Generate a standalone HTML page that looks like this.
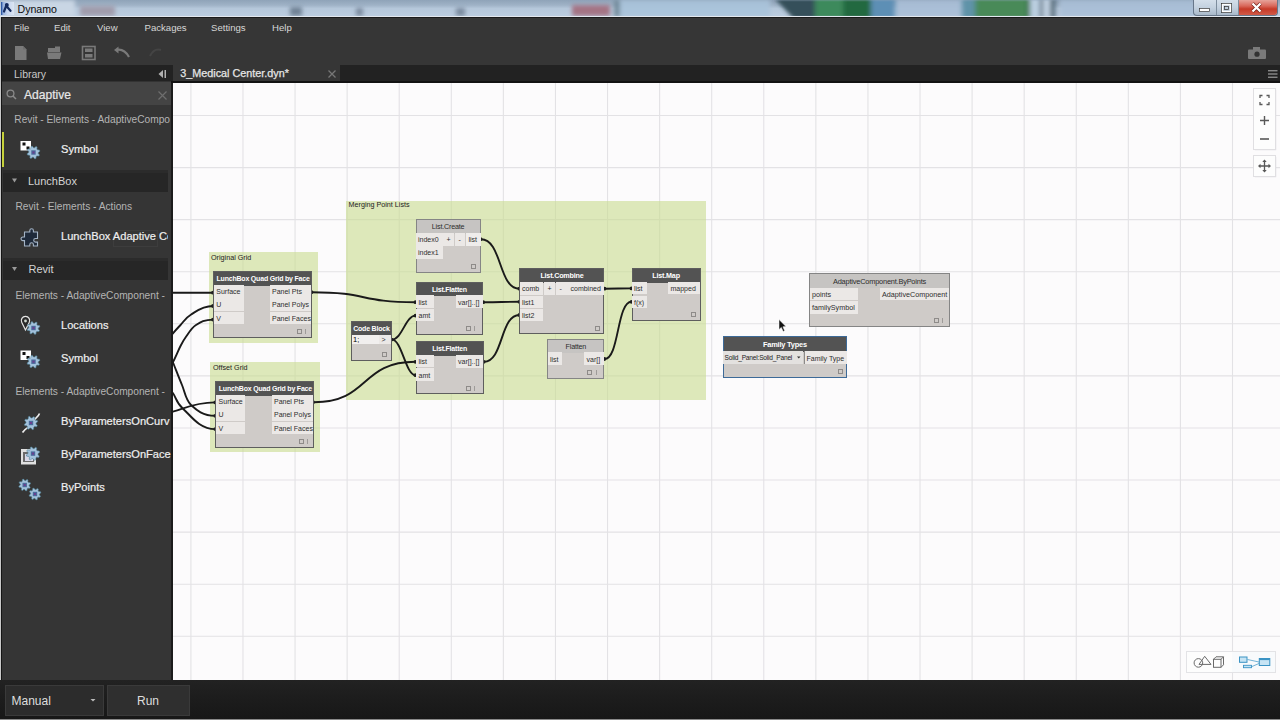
<!DOCTYPE html>
<html><head><meta charset="utf-8"><style>
*{margin:0;padding:0;box-sizing:border-box}
html,body{width:1280px;height:720px;overflow:hidden;background:#333;font-family:"Liberation Sans",sans-serif}
.a{position:absolute}
.t{position:absolute;white-space:nowrap;line-height:1}
.menu{position:absolute;white-space:nowrap;line-height:1;color:#d6d6d6;font-size:9.6px;top:23px}
.cat{position:absolute;white-space:nowrap;line-height:1;color:#b4b4b4;font-size:10.2px}
.item{position:absolute;white-space:nowrap;line-height:1;color:#efefef;font-size:11.1px;-webkit-text-stroke:0.2px #efefef}
.hdrt{position:absolute;white-space:nowrap;line-height:1;color:#d4d4d4;font-size:11px}
.node{position:absolute;background:#cfcbc8;border:1px solid #5e5e5e}
.nh{position:absolute;left:0;top:0;right:0;background:#535353}
.nh.l{background:#c6c4c2}
.ht{position:absolute;white-space:nowrap;line-height:1;color:#fff;font-weight:bold;font-size:7px;letter-spacing:-0.2px}
.ht.l{color:#2c2c2c;font-weight:normal}
.pc{position:absolute;background:#e5e2e0}
.pt{position:absolute;white-space:nowrap;line-height:1;color:#2e2e2e;font-size:7px}
.grp{position:absolute;background:#dfe8c4}
.gt{position:absolute;white-space:nowrap;line-height:1;font-size:7.2px;color:#222}
svg{position:absolute;left:0;top:0;overflow:visible}
</style></head><body>
<div class="a" style="left:0;top:0;width:1280px;height:17px;overflow:hidden;background:linear-gradient(180deg,#8fa3b8 0%,#9fb2c6 30%,#b5c7da 50%,#bccde0 100%)">
<svg width="1280" height="17"><defs><filter id="bl" x="-50%" y="-50%" width="200%" height="200%"><feGaussianBlur stdDeviation="2.2"/></filter><filter id="bl2" x="-20%" y="-50%" width="140%" height="200%"><feGaussianBlur stdDeviation="2.5 0.8"/></filter></defs>
<g filter="url(#bl)">
<rect x="0" y="0" width="75" height="17" fill="#c9d6e4"/>
<rect x="80" y="6" width="35" height="10" fill="#9d97a6" opacity="0.9"/>
<rect x="290" y="7" width="12" height="9" fill="#5f7084" opacity="0.8"/>
<rect x="356" y="8" width="7" height="8" fill="#6a7b8f" opacity="0.8"/>
<rect x="456" y="8" width="9" height="8" fill="#6a7b8f" opacity="0.8"/>
<rect x="572" y="5" width="38" height="11" fill="#a26f80" opacity="0.95"/>
<rect x="614" y="0" width="6" height="17" fill="#6f8797" opacity="0.9"/>
<rect x="620" y="0" width="150" height="17" fill="#a9c3da" opacity="0.9"/>
<rect x="895" y="0" width="70" height="17" fill="#a9bed6" opacity="0.9"/>
<rect x="1060" y="0" width="135" height="17" fill="#a9bfd6" opacity="0.9"/>
</g>
<g filter="url(#bl2)">
<polygon points="776,0 815,0 815,17 792,17" fill="#34505a"/>
<rect x="815" y="0" width="28" height="17" fill="#3c8a5c"/>
<rect x="843" y="0" width="28" height="17" fill="#21693f"/>
<rect x="871" y="0" width="24" height="17" fill="#5d8fb5"/>
<rect x="962" y="0" width="13" height="17" fill="#5e93a8"/>
<rect x="975" y="0" width="52" height="17" fill="#4a8a58"/>
<rect x="1027" y="0" width="3" height="17" fill="#2f6a40"/>
<rect x="1030" y="0" width="10" height="17" fill="#bcd0e2"/>
<rect x="1040" y="0" width="3" height="17" fill="#3d5565"/>
<rect x="1043" y="0" width="7" height="17" fill="#c5d6e6"/>
<rect x="1050" y="0" width="5" height="17" fill="#4a6070"/>
</g></svg>
</div>
<svg width="16" height="17" style="left:0;top:0"><defs><linearGradient id="lg" x1="0" x2="1"><stop offset="0" stop-color="#7f9fd4"/><stop offset="0.5" stop-color="#c6d5ee"/><stop offset="1" stop-color="#dbe5f2"/></linearGradient></defs><rect x="1" y="2" width="13" height="13" fill="url(#lg)"/><rect x="1" y="2" width="1.3" height="13" fill="#2f5aa8"/><circle cx="6.8" cy="5" r="2" fill="#142a5e"/><path d="M6.5 5 L4 11.5 M6.8 6.5 L10.5 10.8" stroke="#142a5e" stroke-width="2.2" stroke-linecap="round"/></svg>
<div class="t" style="left:17.5px;top:3.73px;font-size:10.6px;color:#0c0c0c">Dynamo</div>
<div class="a" style="left:1193px;top:0;width:85px;height:16px;border:1px solid #67778a;border-top:none;border-radius:0 0 4px 4px;overflow:hidden;background:linear-gradient(180deg,#d4dfea 0%,#c3d1df 50%,#a9b9ca 100%)">
<div class="a" style="left:44px;top:0;width:40px;height:15px;background:linear-gradient(180deg,#e6a39a 0%,#d9675a 40%,#c63a28 60%,#d05a48 100%)"></div>
<div class="a" style="left:22px;top:0;width:1px;height:15px;background:#7d8d9d"></div>
<div class="a" style="left:44px;top:0;width:1px;height:15px;background:#7d8d9d"></div>
</div>
<svg width="85" height="16" style="left:1193px;top:0">
<rect x="6.5" y="8.5" width="10" height="3" fill="#fff" stroke="#3a3a3a" stroke-width="0.7"/>
<rect x="28.5" y="3.5" width="10" height="9" fill="none" stroke="#2a2a2a" stroke-width="0.8"/><rect x="29.5" y="4.5" width="8" height="7" fill="none" stroke="#fff" stroke-width="1.4"/><rect x="31.5" y="6.5" width="4" height="3" fill="none" stroke="#2a2a2a" stroke-width="0.7"/>
<path d="M59.5 3.5 L67.5 11.5 M67.5 3.5 L59.5 11.5" stroke="#6a1a10" stroke-width="3.6"/><path d="M59.5 3.5 L67.5 11.5 M67.5 3.5 L59.5 11.5" stroke="#fff" stroke-width="2.4"/>
</svg>
<div class="a" style="left:0px;top:16px;width:1280px;height:1px;background:#e3e8ee"></div>
<div class="a" style="left:0px;top:17px;width:1280px;height:48px;background:#363636"></div>
<div class="a" style="left:0px;top:17px;width:1280px;height:1px;background:#1a1a1a"></div>
<div class="menu" style="left:14px;top:23.17px;font-size:9.6px;">File</div>
<div class="menu" style="left:54px;top:23.17px;font-size:9.6px;">Edit</div>
<div class="menu" style="left:97px;top:23.17px;font-size:9.6px;">View</div>
<div class="menu" style="left:144.5px;top:23.17px;font-size:9.6px;">Packages</div>
<div class="menu" style="left:211px;top:23.17px;font-size:9.6px;">Settings</div>
<div class="menu" style="left:272px;top:23.17px;font-size:9.6px;">Help</div>
<svg width="1280" height="70">
<path d="M15 46 L23 46 L26.5 49.5 L26.5 60 L15 60 Z" fill="#7a7a7a"/><path d="M23 46 L23 49.5 L26.5 49.5" fill="#6e6e6e"/>
<path d="M48 48 L55 48 L55 46.5 L60 46.5 L60 52 L48 52 Z" fill="#7a7a7a"/><path d="M47 52.5 L61.5 52.5 L60 59 L48 59 Z" fill="#7a7a7a"/>
<rect x="82.5" y="46.5" width="12.5" height="13" fill="none" stroke="#7a7a7a" stroke-width="1.6"/><rect x="85" y="48.5" width="7.5" height="3.5" fill="#7a7a7a"/><rect x="85" y="54" width="7.5" height="3.5" fill="#7a7a7a"/>
<path d="M116 50 Q124 48 129 57" fill="none" stroke="#7a7a7a" stroke-width="2.2"/><path d="M114 50 L118.5 46.5 L118.5 53.5 Z" fill="#7a7a7a"/>
<path d="M161 50 Q154 48 150 56" fill="none" stroke="#444" stroke-width="2"/>
<rect x="1248" y="49.5" width="18" height="9.5" rx="1" fill="#7a7a7a"/><rect x="1253" y="47" width="7" height="3" fill="#7a7a7a"/><circle cx="1257" cy="54.2" r="2.6" fill="#333"/>
</svg>
<div class="a" style="left:0px;top:65px;width:1280px;height:16px;background:#222"></div>
<div class="a" style="left:173px;top:65px;width:167px;height:16px;background:#363636"></div>
<div class="t" style="left:14px;top:68.61px;font-size:10.5px;color:#c9c9c9">Library</div>
<div class="t" style="left:180.3px;top:67.76px;font-size:10.8px;color:#e6e6e6;-webkit-text-stroke:0.25px #e6e6e6">3_Medical Center.dyn*</div>
<svg width="1280" height="90">
<path d="M163 70 L163 78 L158.5 74 Z" fill="#b0b0b0"/><rect x="164.5" y="70" width="1.5" height="8" fill="#b0b0b0"/>
<path d="M328.5 70.5 L335.5 77.5 M335.5 70.5 L328.5 77.5" stroke="#777" stroke-width="1.3"/>
<path d="M1268 70.8 H1277.5 M1268 74 H1277.5 M1268 77.2 H1277.5" stroke="#b4b4b4" stroke-width="1"/>
</svg>
<div class="a" style="left:171px;top:81px;width:1109px;height:2px;background:#121212"></div>
<div class="a" style="left:173px;top:83px;width:1107px;height:597px;background:#fcfbfc;overflow:hidden">
<svg width="1107" height="597">
<line x1="-34.18" y1="0" x2="-34.18" y2="597" stroke="#e3e2e5" stroke-width="1.1"/>
<line x1="17.90" y1="0" x2="17.90" y2="597" stroke="#e3e2e5" stroke-width="1.1"/>
<line x1="69.98" y1="0" x2="69.98" y2="597" stroke="#e3e2e5" stroke-width="1.1"/>
<line x1="122.06" y1="0" x2="122.06" y2="597" stroke="#e3e2e5" stroke-width="1.1"/>
<line x1="174.14" y1="0" x2="174.14" y2="597" stroke="#e3e2e5" stroke-width="1.1"/>
<line x1="226.22" y1="0" x2="226.22" y2="597" stroke="#e3e2e5" stroke-width="1.1"/>
<line x1="278.30" y1="0" x2="278.30" y2="597" stroke="#e3e2e5" stroke-width="1.1"/>
<line x1="330.38" y1="0" x2="330.38" y2="597" stroke="#e3e2e5" stroke-width="1.1"/>
<line x1="382.46" y1="0" x2="382.46" y2="597" stroke="#e3e2e5" stroke-width="1.1"/>
<line x1="434.54" y1="0" x2="434.54" y2="597" stroke="#e3e2e5" stroke-width="1.1"/>
<line x1="486.62" y1="0" x2="486.62" y2="597" stroke="#e3e2e5" stroke-width="1.1"/>
<line x1="538.70" y1="0" x2="538.70" y2="597" stroke="#e3e2e5" stroke-width="1.1"/>
<line x1="590.78" y1="0" x2="590.78" y2="597" stroke="#e3e2e5" stroke-width="1.1"/>
<line x1="642.86" y1="0" x2="642.86" y2="597" stroke="#e3e2e5" stroke-width="1.1"/>
<line x1="694.94" y1="0" x2="694.94" y2="597" stroke="#e3e2e5" stroke-width="1.1"/>
<line x1="747.02" y1="0" x2="747.02" y2="597" stroke="#e3e2e5" stroke-width="1.1"/>
<line x1="799.10" y1="0" x2="799.10" y2="597" stroke="#e3e2e5" stroke-width="1.1"/>
<line x1="851.18" y1="0" x2="851.18" y2="597" stroke="#e3e2e5" stroke-width="1.1"/>
<line x1="903.26" y1="0" x2="903.26" y2="597" stroke="#e3e2e5" stroke-width="1.1"/>
<line x1="955.34" y1="0" x2="955.34" y2="597" stroke="#e3e2e5" stroke-width="1.1"/>
<line x1="1007.42" y1="0" x2="1007.42" y2="597" stroke="#e3e2e5" stroke-width="1.1"/>
<line x1="1059.50" y1="0" x2="1059.50" y2="597" stroke="#e3e2e5" stroke-width="1.1"/>
<line x1="1111.58" y1="0" x2="1111.58" y2="597" stroke="#e3e2e5" stroke-width="1.1"/>
<line x1="0" y1="-19.58" x2="1107" y2="-19.58" stroke="#e3e2e5" stroke-width="1.1"/>
<line x1="0" y1="32.50" x2="1107" y2="32.50" stroke="#e3e2e5" stroke-width="1.1"/>
<line x1="0" y1="84.58" x2="1107" y2="84.58" stroke="#e3e2e5" stroke-width="1.1"/>
<line x1="0" y1="136.66" x2="1107" y2="136.66" stroke="#e3e2e5" stroke-width="1.1"/>
<line x1="0" y1="188.74" x2="1107" y2="188.74" stroke="#e3e2e5" stroke-width="1.1"/>
<line x1="0" y1="240.82" x2="1107" y2="240.82" stroke="#e3e2e5" stroke-width="1.1"/>
<line x1="0" y1="292.90" x2="1107" y2="292.90" stroke="#e3e2e5" stroke-width="1.1"/>
<line x1="0" y1="344.98" x2="1107" y2="344.98" stroke="#e3e2e5" stroke-width="1.1"/>
<line x1="0" y1="397.06" x2="1107" y2="397.06" stroke="#e3e2e5" stroke-width="1.1"/>
<line x1="0" y1="449.14" x2="1107" y2="449.14" stroke="#e3e2e5" stroke-width="1.1"/>
<line x1="0" y1="501.22" x2="1107" y2="501.22" stroke="#e3e2e5" stroke-width="1.1"/>
<line x1="0" y1="553.30" x2="1107" y2="553.30" stroke="#e3e2e5" stroke-width="1.1"/>
<line x1="0" y1="605.38" x2="1107" y2="605.38" stroke="#e3e2e5" stroke-width="1.1"/>
</svg></div>
<div class="a" style="left:208.5px;top:251.5px;width:109px;height:91px;background:rgba(200,220,142,0.6)"></div>
<div class="a" style="left:210.2px;top:362.3px;width:109.4px;height:89.7px;background:rgba(200,220,142,0.6)"></div>
<div class="a" style="left:346px;top:200.6px;width:359.5px;height:199px;background:rgba(200,220,142,0.6)"></div>
<div class="gt" style="left:211px;top:253.91px;font-size:7.2px;">Original Grid</div>
<div class="gt" style="left:213px;top:363.91px;font-size:7.2px;">Offset Grid</div>
<div class="gt" style="left:348.5px;top:201.41px;font-size:7.2px;">Merging Point Lists</div>
<svg width="1280" height="720" style="left:0;top:0">
<path d="M312.00 292.20 C368.93 292.20 358.57 302.20 415.50 302.20" fill="none" stroke="#1a1a1a" stroke-width="1.9"/>
<path d="M314.00 402.20 C369.82 402.20 359.68 361.80 415.50 361.80" fill="none" stroke="#1a1a1a" stroke-width="1.9"/>
<path d="M392.00 339.60 C401.87 339.60 405.63 315.60 415.50 315.60" fill="none" stroke="#1a1a1a" stroke-width="1.9"/>
<path d="M392.00 339.60 C401.87 339.60 405.63 375.20 415.50 375.20" fill="none" stroke="#1a1a1a" stroke-width="1.9"/>
<path d="M481.00 239.20 C502.12 239.20 498.28 288.70 519.40 288.70" fill="none" stroke="#1a1a1a" stroke-width="1.9"/>
<path d="M483.50 302.20 C503.25 302.20 499.65 301.80 519.40 301.80" fill="none" stroke="#1a1a1a" stroke-width="1.9"/>
<path d="M484.00 361.80 C503.47 361.80 499.93 315.00 519.40 315.00" fill="none" stroke="#1a1a1a" stroke-width="1.9"/>
<path d="M605.00 288.70 C619.58 288.70 616.92 288.40 631.50 288.40" fill="none" stroke="#1a1a1a" stroke-width="1.9"/>
<path d="M604.50 359.00 C619.35 359.00 616.65 301.80 631.50 301.80" fill="none" stroke="#1a1a1a" stroke-width="1.9"/>
<path d="M165 292.7 L213 292.7" fill="none" stroke="#1a1a1a" stroke-width="1.9"/>
<path d="M160.00 350.00 C162.08 347.32 169.08 338.07 172.50 333.90 C175.92 329.73 177.45 328.20 180.50 325.00 C183.55 321.80 185.38 317.87 190.80 314.70 C196.22 311.53 201.90 306.00 213.00 306.00" fill="none" stroke="#1a1a1a" stroke-width="1.9"/>
<path d="M165.00 375.00 C166.42 372.67 170.92 365.83 173.50 361.00 C176.08 356.17 178.42 350.05 180.50 346.00 C182.58 341.95 183.42 340.20 186.00 336.70 C188.58 333.20 191.50 327.85 196.00 325.00 C200.50 322.15 204.50 319.60 213.00 319.60" fill="none" stroke="#1a1a1a" stroke-width="1.9"/>
<path d="M168.00 350.00 C169.00 352.50 171.67 359.17 174.00 365.00 C176.33 370.83 179.17 378.33 182.00 385.00 C184.83 391.67 185.50 399.87 191.00 405.00 C196.50 410.13 203.00 415.80 215.00 415.80" fill="none" stroke="#1a1a1a" stroke-width="1.9"/>
<path d="M165.00 385.00 C166.33 386.37 170.00 389.25 173.00 393.20 C176.00 397.15 176.00 402.72 183.00 408.70 C190.00 414.68 199.00 429.10 215.00 429.10" fill="none" stroke="#1a1a1a" stroke-width="1.9"/>
<path d="M160.00 415.00 C162.17 414.43 163.83 413.70 173.00 411.60 C182.17 409.50 194.00 402.40 215.00 402.40" fill="none" stroke="#1a1a1a" stroke-width="1.9"/>
<circle cx="311.5" cy="292.2" r="1.9" fill="#1e1e1e"/>
<circle cx="313" cy="402.2" r="1.9" fill="#1e1e1e"/>
<circle cx="391.5" cy="339.6" r="1.9" fill="#1e1e1e"/>
<circle cx="480.6" cy="239.2" r="1.9" fill="#1e1e1e"/>
<circle cx="483.2" cy="302.2" r="1.9" fill="#1e1e1e"/>
<circle cx="483.7" cy="361.8" r="1.9" fill="#1e1e1e"/>
<circle cx="604.5" cy="288.7" r="1.9" fill="#1e1e1e"/>
<circle cx="604.3" cy="359" r="1.9" fill="#1e1e1e"/>
<circle cx="415.5" cy="302.2" r="1.9" fill="#1e1e1e"/>
<circle cx="415.5" cy="315.6" r="1.9" fill="#1e1e1e"/>
<circle cx="415.5" cy="361.8" r="1.9" fill="#1e1e1e"/>
<circle cx="415.5" cy="375.2" r="1.9" fill="#1e1e1e"/>
<circle cx="519.4" cy="288.7" r="1.9" fill="#1e1e1e"/>
<circle cx="519.4" cy="301.8" r="1.9" fill="#1e1e1e"/>
<circle cx="519.4" cy="315" r="1.9" fill="#1e1e1e"/>
<circle cx="631.5" cy="288.4" r="1.9" fill="#1e1e1e"/>
<circle cx="631.5" cy="301.8" r="1.9" fill="#1e1e1e"/>
<circle cx="213" cy="292.7" r="1.9" fill="#1e1e1e"/>
<circle cx="213" cy="306" r="1.9" fill="#1e1e1e"/>
<circle cx="213" cy="319.6" r="1.9" fill="#1e1e1e"/>
<circle cx="215.3" cy="402.4" r="1.9" fill="#1e1e1e"/>
<circle cx="215.3" cy="415.8" r="1.9" fill="#1e1e1e"/>
<circle cx="215.3" cy="429.1" r="1.9" fill="#1e1e1e"/>
</svg>
<div class="node" style="left:213px;top:271px;width:98.5px;height:66.5px"><div class="nh" style="height:13.5px"></div></div>
<div class="a" style="left:213.5px;top:285.1px;width:30px;height:12.5px;background:#ebe8e6"></div>
<div class="a" style="left:269.5px;top:285.1px;width:41.0px;height:12.5px;background:#ebe8e6"></div>
<div class="pt" style="left:216.3px;top:287.87px;font-size:7px;">Surface</div>
<div class="pt" style="left:272.0px;top:287.87px;font-size:7px;">Panel Pts</div>
<div class="a" style="left:213.5px;top:298.45000000000005px;width:30px;height:12.5px;background:#ebe8e6"></div>
<div class="a" style="left:269.5px;top:298.45000000000005px;width:41.0px;height:12.5px;background:#ebe8e6"></div>
<div class="pt" style="left:216.3px;top:301.22px;font-size:7px;">U</div>
<div class="pt" style="left:272.0px;top:301.22px;font-size:7px;">Panel Polys</div>
<div class="a" style="left:213.5px;top:311.8px;width:30px;height:12.5px;background:#ebe8e6"></div>
<div class="a" style="left:269.5px;top:311.8px;width:41.0px;height:12.5px;background:#ebe8e6"></div>
<div class="pt" style="left:216.3px;top:314.57px;font-size:7px;">V</div>
<div class="pt" style="left:272.0px;top:314.57px;font-size:7px;">Panel Faces</div>
<div class="ht" style="left:216.5px;top:274.87px;font-size:7px;">LunchBox Quad Grid by Face</div>
<div class="a" style="left:296.5px;top:328.5px;width:5px;height:5px;border:0.8px solid #8e8b89"></div>
<div class="a" style="left:305.0px;top:328.5px;width:0.8px;height:5px;background:#9e9b99"></div>
<div class="node" style="left:215.3px;top:381px;width:98.5px;height:66.5px"><div class="nh" style="height:13.5px"></div></div>
<div class="a" style="left:215.8px;top:395.1px;width:29.5px;height:12.5px;background:#ebe8e6"></div>
<div class="a" style="left:271.5px;top:395.1px;width:41.30000000000001px;height:12.5px;background:#ebe8e6"></div>
<div class="pt" style="left:218.60000000000002px;top:397.87px;font-size:7px;">Surface</div>
<div class="pt" style="left:274.0px;top:397.87px;font-size:7px;">Panel Pts</div>
<div class="a" style="left:215.8px;top:408.45000000000005px;width:29.5px;height:12.5px;background:#ebe8e6"></div>
<div class="a" style="left:271.5px;top:408.45000000000005px;width:41.30000000000001px;height:12.5px;background:#ebe8e6"></div>
<div class="pt" style="left:218.60000000000002px;top:411.22px;font-size:7px;">U</div>
<div class="pt" style="left:274.0px;top:411.22px;font-size:7px;">Panel Polys</div>
<div class="a" style="left:215.8px;top:421.8px;width:29.5px;height:12.5px;background:#ebe8e6"></div>
<div class="a" style="left:271.5px;top:421.8px;width:41.30000000000001px;height:12.5px;background:#ebe8e6"></div>
<div class="pt" style="left:218.60000000000002px;top:424.57px;font-size:7px;">V</div>
<div class="pt" style="left:274.0px;top:424.57px;font-size:7px;">Panel Faces</div>
<div class="ht" style="left:218.8px;top:384.87px;font-size:7px;">LunchBox Quad Grid by Face</div>
<div class="a" style="left:298.8px;top:438.5px;width:5px;height:5px;border:0.8px solid #8e8b89"></div>
<div class="a" style="left:307.3px;top:438.5px;width:0.8px;height:5px;background:#9e9b99"></div>
<div class="node" style="left:415.6px;top:218.75px;width:65px;height:53.75px;border-color:#858585"><div class="nh l" style="height:13.75px"></div></div>
<div class="a" style="left:416px;top:233px;width:26.5px;height:12.5px;background:#ebe8e6"></div>
<div class="a" style="left:416px;top:246.4px;width:26.5px;height:12.4px;background:#ebe8e6"></div>
<div class="a" style="left:443px;top:233px;width:10.5px;height:12.8px;background:#ebe8e6"></div>
<div class="a" style="left:454.5px;top:233px;width:10.5px;height:12.8px;background:#ebe8e6"></div>
<div class="a" style="left:466px;top:233px;width:14.5px;height:12.8px;background:#efedeb"></div>
<div class="ht l" style="left:415.6px;width:65px;text-align:center;top:222.51px;font-size:7.2px;">List.Create</div>
<div class="pt" style="left:418px;top:236.07px;font-size:7px;">index0</div>
<div class="pt" style="left:418px;top:249.37px;font-size:7px;">index1</div>
<div class="pt" style="left:446.5px;top:235.57px;font-size:7px;">+</div>
<div class="pt" style="left:458.5px;top:235.57px;font-size:7px;">-</div>
<div class="pt" style="left:468.5px;top:236.07px;font-size:7px;">list</div>
<div class="a" style="left:470.5px;top:263.5px;width:5px;height:5px;border:0.8px solid #8e8b89"></div>
<div class="node" style="left:415.5px;top:281.6px;width:67.7px;height:53.4px"><div class="nh" style="height:13.5px"></div></div>
<div class="a" style="left:415.8px;top:295.40000000000003px;width:18px;height:12.5px;background:#ebe8e6"></div>
<div class="a" style="left:415.8px;top:308.8px;width:18px;height:12.4px;background:#ebe8e6"></div>
<div class="a" style="left:455.5px;top:295.40000000000003px;width:27.400000000000006px;height:12.9px;background:#ebe8e6"></div>
<div class="ht" style="left:415.5px;width:67.7px;text-align:center;top:285.97px;font-size:7px;">List.Flatten</div>
<div class="pt" style="left:418.5px;top:298.97px;font-size:7px;">list</div>
<div class="pt" style="left:418.5px;top:312.17px;font-size:7px;">amt</div>
<div class="pt" style="left:458.0px;top:298.97px;font-size:7px;">var[]..[]</div>
<div class="a" style="left:465.5px;top:326.1px;width:5px;height:5px;border:0.8px solid #8e8b89"></div>
<div class="a" style="left:474.0px;top:326.1px;width:0.8px;height:5px;background:#9e9b99"></div>
<div class="node" style="left:415.5px;top:341px;width:68.2px;height:53.4px"><div class="nh" style="height:13.5px"></div></div>
<div class="a" style="left:415.8px;top:354.8px;width:18px;height:12.5px;background:#ebe8e6"></div>
<div class="a" style="left:415.8px;top:368.2px;width:18px;height:12.4px;background:#ebe8e6"></div>
<div class="a" style="left:455.5px;top:354.8px;width:27.900000000000006px;height:12.9px;background:#ebe8e6"></div>
<div class="ht" style="left:415.5px;width:68.2px;text-align:center;top:345.37px;font-size:7px;">List.Flatten</div>
<div class="pt" style="left:418.5px;top:358.37px;font-size:7px;">list</div>
<div class="pt" style="left:418.5px;top:371.57px;font-size:7px;">amt</div>
<div class="pt" style="left:458.0px;top:358.37px;font-size:7px;">var[]..[]</div>
<div class="a" style="left:465.5px;top:385.5px;width:5px;height:5px;border:0.8px solid #8e8b89"></div>
<div class="a" style="left:474.0px;top:385.5px;width:0.8px;height:5px;background:#9e9b99"></div>
<div class="node" style="left:351.3px;top:320.8px;width:40.8px;height:40px"><div class="nh" style="height:13.7px"></div></div>
<div class="a" style="left:352.3px;top:334.5px;width:26.3px;height:9.8px;background:#f1efee"></div>
<div class="a" style="left:379.2px;top:334.5px;width:11.9px;height:9.8px;background:#ebe8e6"></div>
<div class="ht" style="left:351.3px;width:40.2px;text-align:center;top:325.37px;font-size:7px;">Code Block</div>
<div class="t" style="left:353px;top:336.15px;font-size:7.5px;font-family:"Liberation Mono",monospace;color:#222">1;</div>
<div class="pt" style="left:381.5px;top:336.37px;font-size:7px;">&gt;</div>
<div class="a" style="left:381.5px;top:352.0px;width:5px;height:5px;border:0.8px solid #8e8b89"></div>
<div class="node" style="left:519.4px;top:267.6px;width:85.1px;height:66.8px"><div class="nh" style="height:14.4px"></div></div>
<div class="a" style="left:519.7px;top:282.3px;width:23.8px;height:12.5px;background:#ebe8e6"></div>
<div class="a" style="left:519.7px;top:295.7px;width:23.8px;height:12.4px;background:#ebe8e6"></div>
<div class="a" style="left:519.7px;top:308.9px;width:23.8px;height:12.4px;background:#ebe8e6"></div>
<div class="a" style="left:544px;top:282.3px;width:11px;height:12.8px;background:#ebe8e6"></div>
<div class="a" style="left:556px;top:282.3px;width:10.5px;height:12.8px;background:#ebe8e6"></div>
<div class="a" style="left:567.3px;top:282.3px;width:37px;height:12.8px;background:#ebe8e6"></div>
<div class="ht" style="left:519.4px;width:85.1px;text-align:center;top:271.91px;font-size:7.2px;">List.Combine</div>
<div class="pt" style="left:522px;top:285.37px;font-size:7px;">comb</div>
<div class="pt" style="left:522px;top:298.67px;font-size:7px;">list1</div>
<div class="pt" style="left:522px;top:311.87px;font-size:7px;">list2</div>
<div class="pt" style="left:547.5px;top:285.07px;font-size:7px;">+</div>
<div class="pt" style="left:559.5px;top:285.07px;font-size:7px;">-</div>
<div class="pt" style="left:570.5px;top:285.37px;font-size:7px;">combined</div>
<div class="a" style="left:595px;top:326.0px;width:5px;height:5px;border:0.8px solid #8e8b89"></div>
<div class="node" style="left:547.4px;top:338.6px;width:56.9px;height:40.6px;border-color:#858585"><div class="nh l" style="height:13.5px"></div></div>
<div class="a" style="left:547.7px;top:352.4px;width:14.7px;height:13px;background:#ebe8e6"></div>
<div class="a" style="left:584px;top:352.4px;width:20px;height:13px;background:#ebe8e6"></div>
<div class="ht l" style="left:547.4px;width:56.9px;text-align:center;top:342.91px;font-size:7.2px;">Flatten</div>
<div class="pt" style="left:550px;top:355.87px;font-size:7px;">list</div>
<div class="pt" style="left:586.5px;top:355.87px;font-size:7px;">var[]</div>
<div class="a" style="left:587px;top:370.0px;width:5px;height:5px;border:0.8px solid #8e8b89"></div>
<div class="a" style="left:595.5px;top:370.0px;width:0.8px;height:5px;background:#9e9b99"></div>
<div class="node" style="left:631.5px;top:268.3px;width:69.2px;height:53.1px"><div class="nh" style="height:13.3px"></div></div>
<div class="a" style="left:631.8px;top:281.9px;width:15.4px;height:12.6px;background:#ebe8e6"></div>
<div class="a" style="left:631.8px;top:295.5px;width:15.4px;height:12.6px;background:#ebe8e6"></div>
<div class="a" style="left:667.6px;top:281.9px;width:32.8px;height:12.6px;background:#ebe8e6"></div>
<div class="ht" style="left:631.5px;width:69.2px;text-align:center;top:272.41px;font-size:7.2px;">List.Map</div>
<div class="pt" style="left:634px;top:285.27px;font-size:7px;">list</div>
<div class="pt" style="left:634px;top:298.67px;font-size:7px;">f(x)</div>
<div class="pt" style="left:670.5px;top:285.27px;font-size:7px;">mapped</div>
<div class="a" style="left:690.5px;top:312.0px;width:5px;height:5px;border:0.8px solid #8e8b89"></div>
<div class="node" style="left:809.4px;top:273.1px;width:140.2px;height:53.8px;border-color:#858585"><div class="nh l" style="height:14.1px"></div></div>
<div class="a" style="left:809.7px;top:287.5px;width:48px;height:12.8px;background:#ebe8e6"></div>
<div class="a" style="left:809.7px;top:301.2px;width:48px;height:12.5px;background:#ebe8e6"></div>
<div class="a" style="left:880px;top:287.5px;width:68.9px;height:12.8px;background:#ebe8e6"></div>
<div class="ht l" style="left:809.4px;width:140.2px;text-align:center;top:277.54px;font-size:7.4px;">AdaptiveComponent.ByPoints</div>
<div class="pt" style="left:812px;top:290.91px;font-size:7.2px;">points</div>
<div class="pt" style="left:812px;top:303.91px;font-size:7.2px;">familySymbol</div>
<div class="pt" style="left:882px;top:290.91px;font-size:7.2px;">AdaptiveComponent</div>
<div class="a" style="left:933.5px;top:318.0px;width:5px;height:5px;border:0.8px solid #8e8b89"></div>
<div class="a" style="left:942.0px;top:318.0px;width:0.8px;height:5px;background:#9e9b99"></div>
<div class="node" style="left:722.9px;top:336px;width:124.1px;height:41.8px;border:1.6px solid #3d6a98"><div class="nh" style="height:14.7px"></div></div>
<div class="a" style="left:723.2px;top:351px;width:80.3px;height:12.6px;background:#e3e1df"></div>
<div class="a" style="left:804.2px;top:351px;width:42.5px;height:12.6px;background:#ebe8e6"></div>
<div class="a" style="left:803.5px;top:351px;width:0.8px;height:12.6px;background:#8c8a88"></div>
<div class="ht" style="left:722.9px;width:124.1px;text-align:center;top:340.74px;font-size:7.4px;">Family Types</div>
<div class="pt" style="left:724.5px;top:354.71px;font-size:6.6px;color:#222;letter-spacing:-0.2px">Solid_Panel:Solid_Panel</div>
<svg width="900" height="400"><path d="M797 356.5 L800.5 356.5 L798.75 358.5 Z" fill="#333"/></svg>
<div class="pt" style="left:806.5px;top:354.57px;font-size:7px;">Family Type</div>
<div class="a" style="left:838px;top:368.5px;width:5px;height:5px;border:0.8px solid #8e8b89"></div>
<div class="a" style="left:1254.3px;top:88.9px;width:20.7px;height:60.5px;background:#fdfdfd;box-shadow:0 0 0 1px #e0dfe2, 1px 1px 1px #d6d6d8"></div>
<div class="a" style="left:1254.3px;top:155.8px;width:20.7px;height:20.7px;background:#fdfdfd;box-shadow:0 0 0 1px #e0dfe2, 1px 1px 1px #d6d6d8"></div>
<svg width="1280" height="720">
<path d="M1260 98 V95.5 H1262.5 M1266.5 95.5 H1269 V98 M1269 102 V104.5 H1266.5 M1262.5 104.5 H1260 V102" fill="none" stroke="#585858" stroke-width="1.3"/>
<path d="M1264.5 116 V125 M1260 120.5 H1269" stroke="#585858" stroke-width="1.4"/>
<path d="M1260 139 H1269" stroke="#585858" stroke-width="1.6"/>
<path d="M1264.5 160.5 V171.5 M1259 166 H1270" stroke="#585858" stroke-width="1.3"/>
<path d="M1264.5 159.5 L1262.3 162 H1266.7 Z M1264.5 172.5 L1262.3 170 H1266.7 Z M1258 166 L1260.5 163.8 V168.2 Z M1271 166 L1268.5 163.8 V168.2 Z" fill="#585858"/>
</svg>
<div class="a" style="left:1187px;top:651.7px;width:88px;height:20.7px;background:#fdfdfd;box-shadow:0 0 0 1px #e3e3e6"></div>
<div class="a" style="left:1232px;top:652.2px;width:42.5px;height:19.7px;background:#f8fafc"></div>
<svg width="1280" height="720">
<path d="M1204.7 656.3 L1199 664.4 L1211 664.4 Z" fill="none" stroke="#6a6a6a" stroke-width="1"/>
<circle cx="1198.4" cy="662.9" r="4.3" fill="none" stroke="#6a6a6a" stroke-width="1"/>
<rect x="1213.5" y="659.3" width="7.5" height="8" fill="none" stroke="#6a6a6a" stroke-width="1"/><path d="M1213.5 659.3 L1216 656.8 H1223.5 V664.8 L1221 667.3 M1221 659.3 L1223.5 656.8" fill="none" stroke="#6a6a6a" stroke-width="1"/>
<rect x="1239.5" y="657" width="7.5" height="5.3" fill="#c6e4f4" stroke="#3a93c4" stroke-width="1"/>
<rect x="1259.3" y="658.5" width="10.5" height="7" fill="#c6e4f4" stroke="#3a93c4" stroke-width="1"/><rect x="1259.3" y="658.5" width="10.5" height="1.6" fill="#3a93c4"/>
<rect x="1243.5" y="665.3" width="8" height="2.4" fill="#c6e4f4" stroke="#3a93c4" stroke-width="0.9"/>
<path d="M1247.5 659.5 L1259 662 M1252 666.5 L1259 663.5" stroke="#3a93c4" stroke-width="0.7"/>
</svg>
<svg width="1280" height="720"><path d="M779 319.5 L779 329.5 L781.3 327.4 L783.2 331.5 L784.7 330.8 L782.9 326.8 L786 326.6 Z" fill="#111" stroke="#fff" stroke-width="0.5"/></svg>
<div class="a" style="left:0px;top:83px;width:171px;height:597px;background:#353535"></div>
<div class="a" style="left:171px;top:83px;width:2px;height:597px;background:#1b1b1b"></div>
<div class="a" style="left:0px;top:82px;width:171px;height:23px;background:#444"></div>
<div class="t" style="left:24px;top:88.76px;font-size:12.1px;color:#e8e8e8;-webkit-text-stroke:0.2px #e8e8e8">Adaptive</div>
<svg width="180" height="520">
<circle cx="10.5" cy="93.5" r="3.4" fill="none" stroke="#8a8a8a" stroke-width="1.3"/><path d="M13 96 L16 99" stroke="#8a8a8a" stroke-width="1.5"/>
<path d="M158.5 91.5 L166.5 99.5 M166.5 91.5 L158.5 99.5" stroke="#6e6e6e" stroke-width="1.2"/>
</svg>
<div class="cat" style="left:14.3px;top:114.67px;font-size:10.2px;">Revit - Elements - AdaptiveCompo</div>
<div class="a" style="left:2px;top:132px;width:2px;height:35px;background:#c6d23c"></div>
<div class="item" style="left:61px;top:143.6px;font-size:11.1px;">Symbol</div>
<div class="a" style="left:3px;top:170px;width:165px;height:22px;background:#262626;box-shadow:inset 0 3px 0 #2b2b2b"></div>
<svg width="180" height="300"><path d="M12 178.5 L17 178.5 L14.5 182.5 Z" fill="#9a9a9a"/><path d="M12 267 L17 267 L14.5 271 Z" fill="#9a9a9a"/></svg>
<div class="hdrt" style="left:28px;top:175.99px;font-size:11px;">LunchBox</div>
<div class="cat" style="left:15.5px;top:202.17px;font-size:10.2px;">Revit - Elements - Actions</div>
<div class="a" style="left:113px;top:229.5px;width:45px;height:17px;border:1px solid #3d3d3d"></div>
<div class="a" style="left:0;top:220px;width:168px;height:30px;overflow:hidden">
<div class="item" style="left:61px;top:11.4px;font-size:11.1px;">LunchBox Adaptive Component</div>
</div>
<div class="a" style="left:3px;top:258px;width:165px;height:22px;background:#262626;box-shadow:inset 0 3px 0 #2b2b2b"></div>
<svg width="180" height="300"><path d="M12 267 L17 267 L14.5 271 Z" fill="#9a9a9a"/></svg>
<div class="hdrt" style="left:28.5px;top:263.89px;font-size:11px;">Revit</div>
<div class="cat" style="left:15.5px;top:290.57px;font-size:10.2px;">Elements - AdaptiveComponent -</div>
<div class="item" style="left:61px;top:319.8px;font-size:11.1px;">Locations</div>
<div class="item" style="left:61px;top:352.6px;font-size:11.1px;">Symbol</div>
<div class="cat" style="left:15.5px;top:387.17px;font-size:10.2px;">Elements - AdaptiveComponent -</div>
<div class="item" style="left:61px;top:416.4px;font-size:11.1px;">ByParametersOnCurv</div>
<div class="item" style="left:61px;top:449.3px;font-size:11.1px;">ByParametersOnFace</div>
<div class="item" style="left:61px;top:482.3px;font-size:11.1px;">ByPoints</div>
<svg width="180" height="520">
<rect x="20.5" y="141" width="10.5" height="9.5" fill="#fff"/><rect x="22.5" y="142.5" width="3" height="3" fill="#111"/><rect x="26.5" y="146.5" width="3" height="3" fill="#111"/>
<polygon points="39.51,154.99 38.90,156.11 36.90,155.90 36.17,156.50 35.99,158.51 34.77,158.88 33.50,157.31 32.56,157.22 31.01,158.51 29.89,157.90 30.10,155.90 29.50,155.17 27.49,154.99 27.12,153.77 28.69,152.50 28.78,151.56 27.49,150.01 28.10,148.89 30.10,149.10 30.83,148.50 31.01,146.49 32.23,146.12 33.50,147.69 34.44,147.78 35.99,146.49 37.11,147.10 36.90,149.10 37.50,149.83 39.51,150.01 39.88,151.23 38.31,152.50 38.22,153.44" fill="#a3c2dc" stroke="#4d7f93" stroke-width="0.6"/><rect x="31.30" y="150.30" width="4.4" height="4.4" fill="#4a6a9a"/><rect x="32.50" y="151.50" width="2" height="2" fill="#6b3f8f"/>
<path d="M24.5 232 H29.8 V230.5 A1.8 1.8 0 0 1 33.4 230.5 V232 H37.5 V238.5 H35.5 A1.8 1.8 0 0 0 35.5 242.1 H37.5 V246 H33.4 V244.5 A1.8 1.8 0 0 0 29.8 244.5 V246 H24.5 V240.6 H22.8 A1.8 1.8 0 0 1 22.8 237 H24.5 Z" fill="#1f2a3a" stroke="#a4b4c6" stroke-width="1.1"/>
<path d="M25.5 330 L21.8 322.5 A4.2 4.2 0 1 1 29.2 322.5 Z" fill="#2a2a2a" stroke="#e6e6e6" stroke-width="1.2"/><circle cx="25.5" cy="321" r="1.4" fill="#cfd8cf"/>
<polygon points="39.51,330.49 38.90,331.61 36.90,331.40 36.17,332.00 35.99,334.01 34.77,334.38 33.50,332.81 32.56,332.72 31.01,334.01 29.89,333.40 30.10,331.40 29.50,330.67 27.49,330.49 27.12,329.27 28.69,328.00 28.78,327.06 27.49,325.51 28.10,324.39 30.10,324.60 30.83,324.00 31.01,321.99 32.23,321.62 33.50,323.19 34.44,323.28 35.99,321.99 37.11,322.60 36.90,324.60 37.50,325.33 39.51,325.51 39.88,326.73 38.31,328.00 38.22,328.94" fill="#a3c2dc" stroke="#4d7f93" stroke-width="0.6"/><rect x="31.30" y="325.80" width="4.4" height="4.4" fill="#4a6a9a"/><rect x="32.50" y="327.00" width="2" height="2" fill="#6b3f8f"/>
<rect x="20.5" y="350.5" width="10.5" height="9.5" fill="#fff"/><rect x="22.5" y="352.0" width="3" height="3" fill="#111"/><rect x="26.5" y="356.0" width="3" height="3" fill="#111"/>
<polygon points="39.51,364.19 38.90,365.31 36.90,365.10 36.17,365.70 35.99,367.71 34.77,368.08 33.50,366.51 32.56,366.42 31.01,367.71 29.89,367.10 30.10,365.10 29.50,364.37 27.49,364.19 27.12,362.97 28.69,361.70 28.78,360.76 27.49,359.21 28.10,358.09 30.10,358.30 30.83,357.70 31.01,355.69 32.23,355.32 33.50,356.89 34.44,356.98 35.99,355.69 37.11,356.30 36.90,358.30 37.50,359.03 39.51,359.21 39.88,360.43 38.31,361.70 38.22,362.64" fill="#a3c2dc" stroke="#4d7f93" stroke-width="0.6"/><rect x="31.30" y="359.50" width="4.4" height="4.4" fill="#4a6a9a"/><rect x="32.50" y="360.70" width="2" height="2" fill="#6b3f8f"/>
<path d="M22.5 432.5 C26 427 30 428 32 423 C34 418 38 418 39.5 413.5" fill="none" stroke="#eee" stroke-width="1.6"/>
<polygon points="37.28,425.60 36.65,426.78 34.56,426.56 33.80,427.18 33.60,429.28 32.33,429.67 31.00,428.03 30.02,427.94 28.40,429.28 27.22,428.65 27.44,426.56 26.82,425.80 24.72,425.60 24.33,424.33 25.97,423.00 26.06,422.02 24.72,420.40 25.35,419.22 27.44,419.44 28.20,418.82 28.40,416.72 29.67,416.33 31.00,417.97 31.98,418.06 33.60,416.72 34.78,417.35 34.56,419.44 35.18,420.20 37.28,420.40 37.67,421.67 36.03,423.00 35.94,423.98" fill="#a3c2dc" stroke="#4d7f93" stroke-width="0.6"/><rect x="28.80" y="420.80" width="4.4" height="4.4" fill="#4a6a9a"/><rect x="30.00" y="422.00" width="2" height="2" fill="#6b3f8f"/>
<rect x="21" y="449" width="15" height="15.5" fill="#e0e0e0"/><rect x="23" y="452" width="11" height="10" fill="#6a6a6a"/><rect x="25" y="454" width="8" height="7" fill="#d8d8e8"/>
<polygon points="39.28,456.20 38.65,457.38 36.56,457.16 35.80,457.78 35.60,459.88 34.33,460.27 33.00,458.63 32.02,458.54 30.40,459.88 29.22,459.25 29.44,457.16 28.82,456.40 26.72,456.20 26.33,454.93 27.97,453.60 28.06,452.62 26.72,451.00 27.35,449.82 29.44,450.04 30.20,449.42 30.40,447.32 31.67,446.93 33.00,448.57 33.98,448.66 35.60,447.32 36.78,447.95 36.56,450.04 37.18,450.80 39.28,451.00 39.67,452.27 38.03,453.60 37.94,454.58" fill="#a3c2dc" stroke="#4d7f93" stroke-width="0.6"/><rect x="30.80" y="451.40" width="4.4" height="4.4" fill="#4a6a9a"/><rect x="32.00" y="452.60" width="2" height="2" fill="#6b3f8f"/>
<polygon points="30.24,487.30 29.69,488.33 27.84,488.14 27.17,488.69 27.00,490.54 25.87,490.88 24.70,489.44 23.83,489.35 22.40,490.54 21.37,489.99 21.56,488.14 21.01,487.47 19.16,487.30 18.82,486.17 20.26,485.00 20.35,484.13 19.16,482.70 19.71,481.67 21.56,481.86 22.23,481.31 22.40,479.46 23.53,479.12 24.70,480.56 25.57,480.65 27.00,479.46 28.03,480.01 27.84,481.86 28.39,482.53 30.24,482.70 30.58,483.83 29.14,485.00 29.05,485.87" fill="#a3c2dc" stroke="#4d7f93" stroke-width="0.6"/><rect x="22.50" y="482.80" width="4.4" height="4.4" fill="#4a6a9a"/><rect x="23.70" y="484.00" width="2" height="2" fill="#6b3f8f"/>
<polygon points="40.54,496.30 39.99,497.33 38.14,497.14 37.47,497.69 37.30,499.54 36.17,499.88 35.00,498.44 34.13,498.35 32.70,499.54 31.67,498.99 31.86,497.14 31.31,496.47 29.46,496.30 29.12,495.17 30.56,494.00 30.65,493.13 29.46,491.70 30.01,490.67 31.86,490.86 32.53,490.31 32.70,488.46 33.83,488.12 35.00,489.56 35.87,489.65 37.30,488.46 38.33,489.01 38.14,490.86 38.69,491.53 40.54,491.70 40.88,492.83 39.44,494.00 39.35,494.87" fill="#a3c2dc" stroke="#4d7f93" stroke-width="0.6"/><rect x="32.80" y="491.80" width="4.4" height="4.4" fill="#4a6a9a"/><rect x="34.00" y="493.00" width="2" height="2" fill="#6b3f8f"/>
</svg>
<div class="a" style="left:0px;top:17px;width:1.2px;height:703px;background:#c8c8c8"></div>
<div class="a" style="left:1.2px;top:17px;width:0.9px;height:663px;background:#151515"></div>
<div class="a" style="left:0px;top:680px;width:1280px;height:40px;background:linear-gradient(180deg,#222 0%,#1d1d1d 40%,#171717 100%)"></div>
<div class="a" style="left:0px;top:719px;width:1280px;height:1px;background:#8a8a8a"></div>
<div class="a" style="left:5px;top:684.5px;width:99px;height:31px;background:#2c2c2c;box-shadow:inset 0 0 0 1px #3a3a3a"></div>
<div class="a" style="left:107px;top:684.5px;width:83px;height:31px;background:#2f2f2f;box-shadow:inset 0 0 0 1px #3a3a3a"></div>
<div class="t" style="left:11.5px;top:694.54px;font-size:12px;color:#dedede">Manual</div>
<div class="t" style="left:137px;top:694.54px;font-size:12px;color:#dedede">Run</div>
<svg width="200" height="720"><path d="M90.5 699 L95.5 699 L93 701.5 Z" fill="#bbb"/></svg>
</body></html>
